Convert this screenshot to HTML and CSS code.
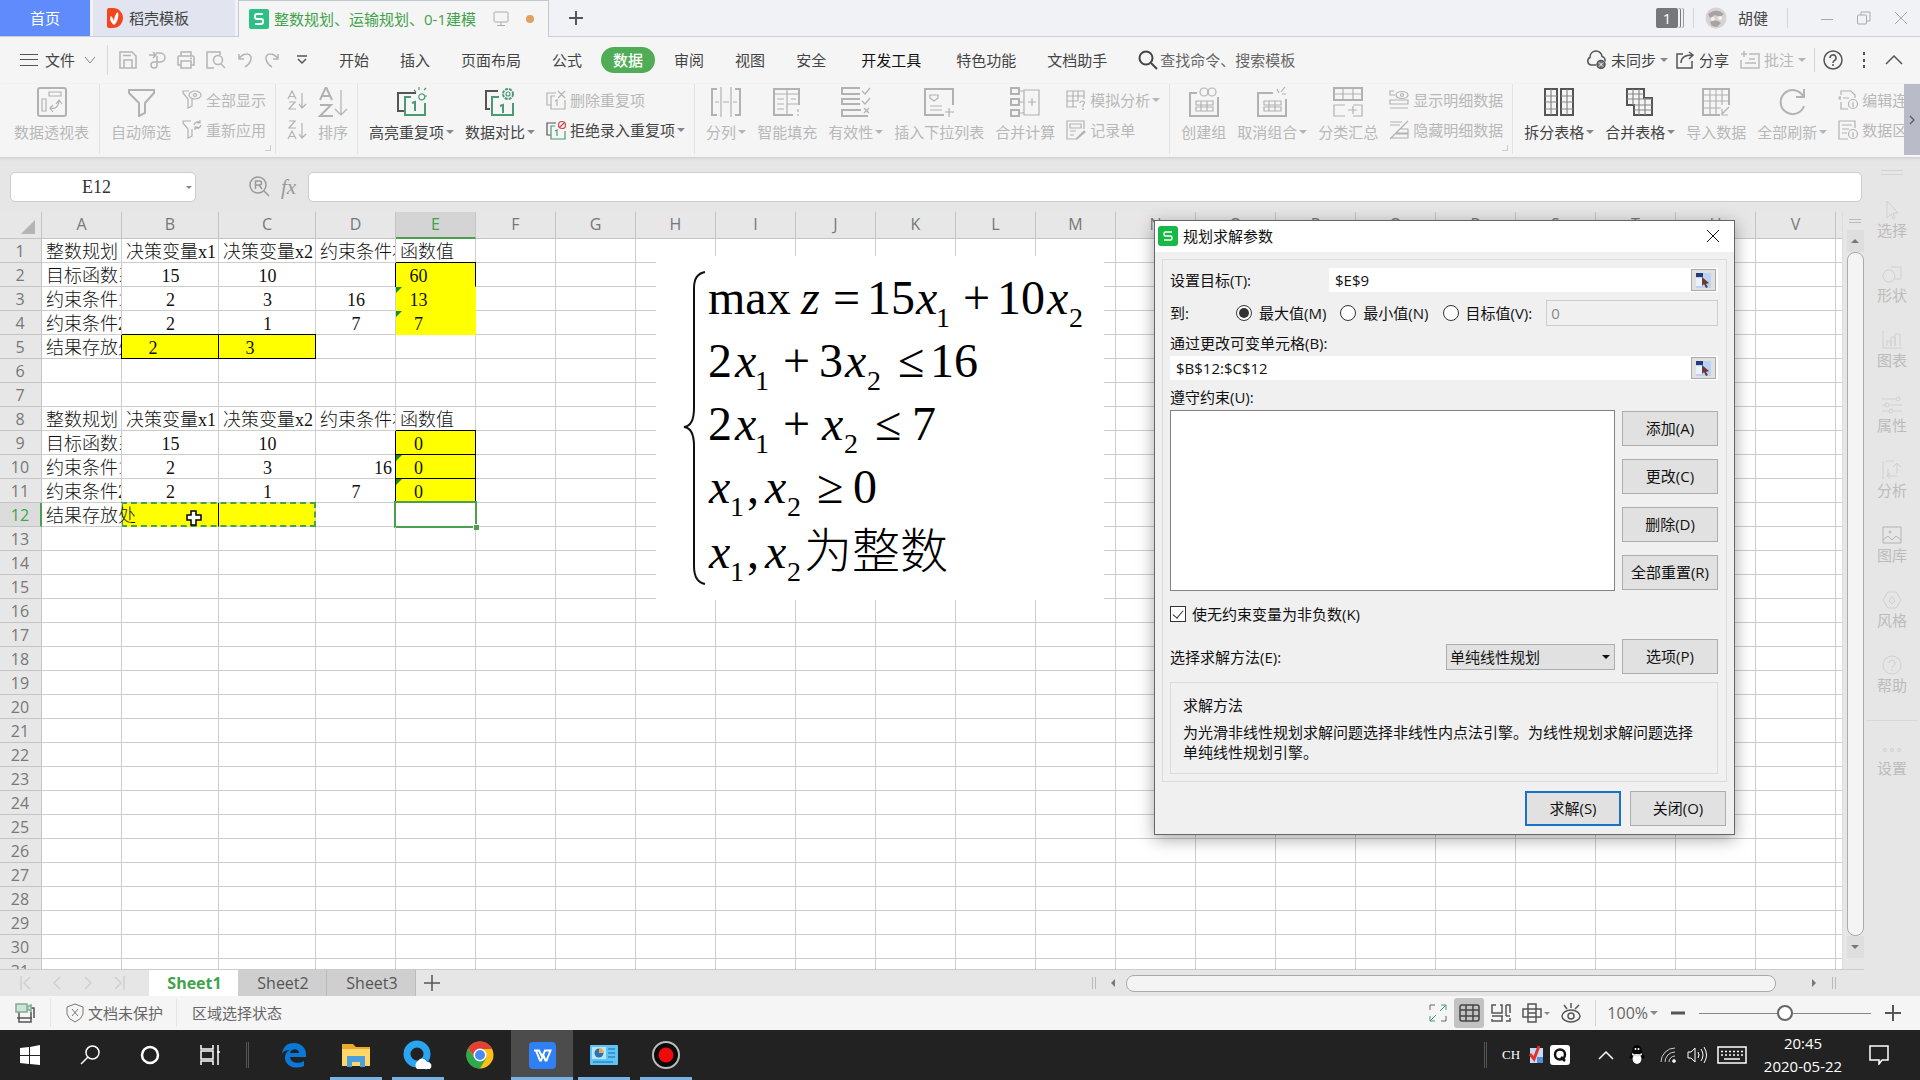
FILE: index.html
```html
<!DOCTYPE html>
<html lang="zh-CN">
<head>
<meta charset="utf-8">
<title>整数规划、运输规划、0-1建模</title>
<link rel="stylesheet" href="styles.css">
</head>
<body>
<header class="titlebar">
  <nav class="doc-tabs">
    <button class="doc-tab home">首页</button>
    <button class="doc-tab store">
      <svg width="16" height="20" viewBox="0 0 16 20"><path d="M0 2q0-2 2-2h4c6 0 10 5 10 10s-4 10-10 10H2q-2 0-2-2z" fill="#f5451f"/><path d="M7 17C2 13 3 9 4 8c2 2 3 4 3 6 0-4 1-8 4-10 1 4 0 10-4 13z" fill="#fff"/></svg>
      稻壳模板</button>
    <button class="doc-tab current">
      <svg width="20" height="20" viewBox="0 0 20 20"><rect width="20" height="20" rx="2" fill="#2cbf86"/><path d="M14 5H8Q6 5 6 7v1q0 2 2 2h4q2 0 2 2v1q0 2-2 2H6" fill="none" stroke="#fff" stroke-width="2"/></svg>
      <span>整数规划、运输规划、0-1建模</span>
      <svg class="monitor" width="16" height="16" viewBox="0 0 16 16" fill="none" stroke="#aaa"><rect x="1" y="1" width="14" height="10" rx="1"/><path d="M8 11v3M4 14.500h8"/></svg>
      <i class="unsaved"></i>
    </button>
    <button class="new-tab" aria-label="新建"><svg width="16" height="16" viewBox="0 0 16 16" stroke="#555" stroke-width="2"><path d="M8 1v14M1 8h14"/></svg></button>
  </nav>
  <div class="account">
    <span class="badge">1</span>
    <i class="rule"></i>
    <svg class="avatar" width="22" height="22" viewBox="0 0 22 22"><circle cx="11" cy="11" r="10.500" fill="#d8d3d3"/><path d="M3 7q8-7 16 0l-4 3-5-2-5 3zM5 15q6-4 11 1l-4 4-5-1z" fill="#a9a1a3"/><circle cx="8" cy="12" r="2" fill="#f3efef"/><circle cx="15" cy="11" r="2" fill="#f8f4f4"/></svg>
    <span class="user">胡健</span>
    <i class="rule"></i>
    <button class="win" aria-label="最小化"><svg width="14" height="14" viewBox="0 0 14 14" stroke="#aaa"><path d="M1 8.500h12"/></svg></button>
    <button class="win" aria-label="还原"><svg width="14" height="14" viewBox="0 0 14 14" fill="none" stroke="#aaa"><rect x=".5" y="4" width="9" height="9" rx="1"/><path d="M4 4V1h9v9H9.500"/></svg></button>
    <button class="win" aria-label="关闭"><svg width="14" height="14" viewBox="0 0 14 14" stroke="#aaa"><path d="M1 1l12 12M13 1L1 13"/></svg></button>
  </div>
</header>

<div class="menubar">
  <button class="file"><svg width="18" height="14" viewBox="0 0 18 14" stroke="#555"><path d="M0 1.500h18M0 6.500h18M0 12.500h18"/></svg>文件<svg class="chev" width="12" height="8" viewBox="0 0 12 8" fill="none" stroke="#888"><path d="M1 1l5 6 5-6"/></svg></button>
  <div class="quick">
    <button aria-label="保存"><svg width="18" height="18" viewBox="0 0 18 18"><path d="M1 1h12l4 4v12H1zM5 17V9h8v8M4 4.500h8"/></svg></button>
    <button aria-label="输出"><svg width="18" height="18" viewBox="0 0 18 18"><path d="M1 4h6M5 1l3 3-3 3M8 2h4a5 4.500 0 0 1 0 9H6a3 3 0 1 0 3 3V5"/></svg></button>
    <button aria-label="打印"><svg width="18" height="18" viewBox="0 0 18 18"><path d="M4 5V1h10v4M1 6q0-1 1-1h14q1 0 1 1v8h-3M4 14H1V6M4 10h10v7H4zM13 7.500h2"/></svg></button>
    <button aria-label="打印预览"><svg width="20" height="18" viewBox="0 0 20 18"><path d="M8 17H1V1h13v3"/><circle cx="12" cy="9" r="4.500"/><path d="M15 13l4 4"/></svg></button>
    <button aria-label="撤销"><svg width="16" height="18" viewBox="0 0 16 18"><path d="M2 3v5h5M2 8q3-5 8-5a4 4 0 0 1 4 5q-1 5-6 8"/></svg></button>
    <button aria-label="恢复"><svg width="16" height="18" viewBox="0 0 16 18"><path d="M14 3v5H9M14 8q-3-5-8-5a4 4 0 0 0-4 5q1 5 6 8"/></svg></button>
    <button class="more" aria-label="更多"><svg width="10" height="10" viewBox="0 0 10 10"><path d="M0 1h10M1 4l4 4 4-4"/></svg></button>
  </div>
  <nav class="menus">
    <button>开始</button><button>插入</button><button>页面布局</button><button>公式</button><button class="active">数据</button><button>审阅</button><button>视图</button><button>安全</button><button class="dev">开发工具</button><button>特色功能</button><button>文档助手</button>
    <button class="search"><svg width="20" height="20" viewBox="0 0 20 20" fill="none" stroke="#444" stroke-width="2"><circle cx="8" cy="8" r="6.500"/><path d="M13 13l6 6"/></svg>查找命令、搜索模板</button>
  </nav>
  <div class="share">
    <button><svg width="21" height="20" viewBox="0 0 21 20" fill="none" stroke="#555" stroke-width="1.500"><path d="M10 15H5a4 4 0 0 1-1-7.500 6 6 0 0 1 12-1 4 4 0 0 1 3 5"/><circle cx="15" cy="14.500" r="4" fill="#777"/><path d="M13 12.500l4 4M17 12.500l-4 4" stroke="#fff" stroke-width="1"/></svg>未同步<i class="caret"></i></button>
    <button class="b-share"><svg width="19" height="18" viewBox="0 0 19 18" fill="none" stroke="#555" stroke-width="1.500"><path d="M7 3H1v14h15v-7M5 12c0-5 3-8 11-8M13 1l4 3-4 4"/></svg>分享</button>
    <button class="dim"><svg width="20" height="18" viewBox="0 0 20 18" fill="none" stroke="#bbb" stroke-width="1.500"><path d="M9 3h10v14H1V9M1 3h6M4 0v6M9 8h6M5 12h11"/></svg>批注<i class="caret"></i></button>
    <i class="rule"></i>
    <button aria-label="帮助"><svg width="20" height="20" viewBox="0 0 20 20" fill="none" stroke="#555" stroke-width="1.500"><circle cx="10" cy="10" r="9"/><path d="M7 8a3 3 0 1 1 4.500 2.500Q10 11 10 13M10 14v2"/></svg></button>
    <button class="dots" aria-label="更多"><svg width="4" height="16" viewBox="0 0 4 16" fill="#555"><path d="M1 0h2v3H1zM1 7h2v3H1zM1 13h2v3H1z"/></svg></button>
    <button aria-label="收起"><svg width="18" height="10" viewBox="0 0 18 10" fill="none" stroke="#555" stroke-width="1.500"><path d="M1 9l8-8 8 8"/></svg></button>
  </div>
</div>

<div class="ribbon">
  <div class="group">
    <button class="big dim"><svg viewBox="0 0 30 30"><rect x="1" y="1" width="28" height="28" rx="2" stroke-width="2"/><path d="M12 5h12v4H12zM5 12h4v12H5zM13 21q8 2 9-7M19 17l3-4 3 4M16 18l-3 3 3 4"/></svg><span>数据透视表</span></button>
  </div>
  <div class="group">
    <button class="big dim"><svg viewBox="0 0 30 30"><path d="M3 3h25v3l-9 10v10l-6 3V16L3 6z" stroke-width="2"/></svg><span>自动筛选</span></button>
    <div class="pair">
      <button class="small dim"><svg viewBox="0 0 20 20"><path d="M7 1H1v2l5 6v9l4-2V9"/><ellipse cx="13" cy="5" rx="6" ry="4"/><circle cx="13" cy="5" r="1.500"/></svg>全部显示</button>
      <button class="small dim"><svg viewBox="0 0 20 20"><path d="M9 1H1v2l5 6v9l4-2V9M12 5q1-4 6-3M18 0v3h-3M19 5q-1 4-6 3M13 10V7h3"/></svg>重新应用</button>
    </div>
    <i class="launch"></i>
  </div>
  <div class="group">
    <div class="pair">
      <button class="small dim" aria-label="升序"><svg viewBox="0 0 20 20"><path d="M1 9l4-8 4 8M2.500 6.500h5M2 12h6l-6 7h7M15 3v15M12 14l3 4 4-4"/></svg></button>
      <button class="small dim" aria-label="降序"><svg viewBox="0 0 20 20"><path d="M2 1h6L2 8h7M1 19l4-8 4 8M2.500 16.500h5M15 3v15M12 14l3 4 4-4"/></svg></button>
    </div>
    <button class="big dim"><svg viewBox="0 0 30 30"><path d="M2 13L8 0l6 13M4 9h8M2 18h11L2 29h13" stroke-width="2"/><path d="M23 3v25M17 22l6 6 6-6"/></svg><span>排序</span></button>
  </div>
  <div class="group">
    <button class="big"><svg viewBox="0 0 30 30"><path d="M8 24H1V6h18" stroke-width="2"/><path d="M14 10H8v18h20V16M15 16l3-1v9" stroke="#4b9a76" stroke-width="2"/><path d="M22 11a3 3 0 1 0 2-4 3 3 0 0 0-2 4M22 0v3M17 3l2 2M27 3l2-2M27 9h3" stroke="#4b9a76"/></svg><span>高亮重复项<i class="caret"></i></span></button>
    <button class="big"><svg viewBox="0 0 30 30"><path d="M5 22H1V4h12" stroke-width="2"/><path d="M14 10H7v18h21V16M15 19l3-1v8" stroke="#4b9a76" stroke-width="2"/><circle cx="23" cy="7" r="5" stroke="#4b9a76" stroke-width="2" stroke-dasharray="3 1"/><circle cx="23" cy="7" r="2" stroke="#4b9a76"/></svg><span>数据对比<i class="caret"></i></span></button>
    <div class="pair">
      <button class="small dim"><svg viewBox="0 0 20 20"><path d="M5 15H1V3h9M9 6H5v13h14V10M9 11l2-1v6M12 1l7 7M19 1l-7 7"/></svg>删除重复项</button>
      <button class="small"><svg viewBox="0 0 20 20"><path d="M5 15H1V3h9"/><path d="M9 6H5v13h14V11M9 11l2-1v6" stroke="#4b9a76"/><circle cx="16" cy="5" r="3.500" stroke="#d0454c"/><path d="M13.500 7.500l5-5" stroke="#d0454c"/></svg>拒绝录入重复项<i class="caret"></i></button>
    </div>
  </div>
  <div class="group">
    <button class="big dim"><svg viewBox="0 0 30 30"><path d="M6 2H1v26h5M24 2h5v26h-5" stroke-width="2"/><path d="M10 0v30M20 0v30M4 15h4M12 15h6M22 15h4"/></svg><span>分列<i class="caret"></i></span></button>
    <button class="big dim"><svg viewBox="0 0 30 30"><path d="M27 18V2H2v26h19" stroke-width="2"/><path d="M15 2v26M2 7h25M5 12h7M5 17h7M5 22h7M15 17h12M19 12h5M26 22v3M26 27v2"/></svg><span>智能填充</span></button>
    <button class="big dim"><svg viewBox="0 0 30 30"><path d="M19 1H1v6h18M19 12H1v5h18M20 23H1v6h26" stroke-width="2"/><path d="M21 4l3 3 5-6M21 14l3 3 5-6M23 21l5 5M28 21l-5 5"/></svg><span>有效性<i class="caret"></i></span></button>
    <button class="big dim"><svg viewBox="0 0 30 30"><path d="M29 18V2H1v26h19" stroke-width="2"/><path d="M6 8h8v3l-4 3-4-3zM6 19h12M6 23h12M25 21v9M21 25h9"/></svg><span>插入下拉列表</span></button>
    <button class="big dim"><svg viewBox="0 0 30 30"><path d="M1 1h8v6H1zM1 12h8v6H1zM1 23h8v6H1z" stroke-width="2"/><path d="M14 3h15v25H14zM9 4h5M9 15h5M9 26h5M18 15h8M22 11v8"/></svg><span>合并计算</span></button>
    <div class="pair">
      <button class="small dim"><svg viewBox="0 0 20 20"><path d="M18 9V1H1v16h10M1 6h17M1 11h11M7 1v16M12 1v10M14 13q0-2 3-2 3 1 0 4v2M17 18v2"/></svg>模拟分析<i class="caret"></i></button>
      <button class="small dim"><svg viewBox="0 0 20 20"><path d="M18 9V1H1v18h8M4 4h11v4H4zM4 11h6M4 15h4M10 19l8-8 1 1-8 7z"/></svg>记录单</button>
    </div>
  </div>
  <div class="group">
    <button class="big dim"><svg viewBox="0 0 30 30"><path d="M8 6H1v23h28V10" stroke-width="2"/><path d="M7 14h17v4H7zM7 20h17v4H7zM12 14v10M18 14v10"/><circle cx="15" cy="5" r="4"/><circle cx="23" cy="5" r="4"/></svg><span>创建组</span></button>
    <button class="big dim"><svg viewBox="0 0 30 30"><path d="M16 6H1v23h28V12" stroke-width="2"/><path d="M7 14h17v4H7zM7 20h17v4H7zM12 14v10M18 14v10M20 2l2 4M28 0l-4 5M29 7h-4"/></svg><span>取消组合<i class="caret"></i></span></button>
    <button class="big dim"><svg viewBox="0 0 30 30"><path d="M1 1h28v12H1z" stroke-width="2"/><path d="M1 7h28M10 1v12M20 1v12M12 18H1v11h11M20 18h9v11h-9M15 23h9M20 19v8"/></svg><span>分类汇总</span></button>
    <div class="pair">
      <button class="small dim"><svg viewBox="0 0 20 20"><path d="M5 1H1v4h5M1 10h18v4H1zM1 18h18"/><ellipse cx="13" cy="5" rx="6" ry="3.500"/><circle cx="13" cy="5" r="1.500"/></svg>显示明细数据</button>
      <button class="small dim"><svg viewBox="0 0 20 20"><path d="M1 19L19 1M12 9h7v4H8M6 14h13v4H1M1 2h12M1 5h10"/></svg>隐藏明细数据</button>
    </div>
    <i class="launch"></i>
  </div>
  <div class="group">
    <button class="big"><svg viewBox="0 0 30 30"><path d="M1 2h12v26H1zM17 2h12v26H17z" stroke-width="2"/><path d="M1 9h12M1 15h12M1 22h12M7 2v26M17 9h12M17 15h12M17 22h12M23 2v26" stroke="#888"/></svg><span>拆分表格<i class="caret"></i></span></button>
    <button class="big"><svg viewBox="0 0 30 30"><path d="M2 2h17v9h8v17H9V18H2z" stroke-width="2"/><path d="M8 2v16M14 2v26M20 11v17M2 7h17M2 12h25M9 18h18M9 23h18" stroke="#888"/></svg><span>合并表格<i class="caret"></i></span></button>
    <button class="big dim"><svg viewBox="0 0 30 30"><path d="M28 18V2H2v26h17" stroke-width="2"/><path d="M2 8h26M2 14h26M2 21h18M9 2v26M15 2v26M21 2v16M28 20l-7 7M21 22v6h6" /></svg><span>导入数据</span></button>
    <button class="big dim"><svg viewBox="0 0 30 30"><path d="M26 9A12 12 0 1 0 27 19M27 2v8h-8" stroke-width="2"/></svg><span>全部刷新<i class="caret"></i></span></button>
    <div class="pair clip">
      <button class="small dim"><svg viewBox="0 0 20 20"><path d="M3 5V1h10l4 4v3M3 12v7h7M0 8h3M5 8h6M2 6v4"/><circle cx="15" cy="14" r="4.500"/><path d="M15 12v5"/></svg>编辑连接</button>
      <button class="small dim"><svg viewBox="0 0 20 20"><path d="M17 8V1H1v18h9M4 5h10M4 9h7M4 13h5"/><circle cx="15" cy="14" r="4.500"/><path d="M15 12v5"/></svg>数据区域</button>
    </div>
  </div>
  <button class="ribbon-scroll" aria-label="向右滚动"><svg width="6" height="10" viewBox="0 0 6 10"><path d="M1 1l4 4-4 4"/></svg></button>
</div>

<div class="work">
  <main class="editor">
    <div class="formula-bar">
      <div class="name-box"><input aria-label="名称框" value="E12"><i class="caret"></i></div>
      <svg class="find" width="21" height="22" viewBox="0 0 21 22" fill="none" stroke="#999" stroke-width="1.500"><circle cx="9" cy="9" r="8"/><path d="M15 15l5 5M6.500 13V5h4q2 0 2 2t-2 2h-4M10 9l3 4"/></svg>
      <i class="fx">fx</i>
      <input class="formula" aria-label="编辑栏">
    </div>
    <div class="sheet-area">
      <div class="sheet">
        <table id="grid"></table>
        <svg class="formula-picture" width="448" height="344" viewBox="0 0 448 344">
          <rect width="448" height="344" fill="#fff"/>
          <path d="M49 16Q38 18 38 32V152Q38 170 28 171Q38 172 38 190V310Q38 326 49 328" fill="none" stroke="#111" stroke-width="2"/>
          <g class="math">
            <text y="58"><tspan x="52">max</tspan><tspan x="145" class="v">z</tspan><tspan x="177">=</tspan><tspan x="211">15</tspan><tspan x="260" class="v">x</tspan><tspan x="307">+</tspan><tspan x="341">10</tspan><tspan x="391" class="v">x</tspan></text>
            <text y="71" class="sub"><tspan x="280">1</tspan><tspan x="413">2</tspan></text>
            <text y="121"><tspan x="52">2</tspan><tspan x="79" class="v">x</tspan><tspan x="127">+</tspan><tspan x="163">3</tspan><tspan x="189" class="v">x</tspan><tspan x="242">≤</tspan><tspan x="274">16</tspan></text>
            <text y="134" class="sub"><tspan x="99">1</tspan><tspan x="211">2</tspan></text>
            <text y="184"><tspan x="52">2</tspan><tspan x="79" class="v">x</tspan><tspan x="127">+</tspan><tspan x="166" class="v">x</tspan><tspan x="219">≤</tspan><tspan x="256">7</tspan></text>
            <text y="197" class="sub"><tspan x="99">1</tspan><tspan x="188">2</tspan></text>
            <text y="247"><tspan x="53" class="v">x</tspan><tspan x="91">,</tspan><tspan x="109" class="v">x</tspan><tspan x="161">≥</tspan><tspan x="197">0</tspan></text>
            <text y="260" class="sub"><tspan x="74">1</tspan><tspan x="131">2</tspan></text>
            <text y="312"><tspan x="53" class="v">x</tspan><tspan x="91">,</tspan><tspan x="109" class="v">x</tspan><tspan x="148" class="han">为整数</tspan></text>
            <text y="325" class="sub"><tspan x="74">1</tspan><tspan x="131">2</tspan></text>
          </g>
        </svg>
        <svg class="pointer" width="16" height="16" viewBox="0 0 16 16"><path d="M5 1h5v4h5v5h-5v5H5v-5H1V5h4z" fill="#fff" stroke="#000" stroke-width="1.500"/></svg>
      </div>
      <div class="vscroll"><i class="split"></i><i class="arrow up"></i><div class="thumb"></div><i class="arrow down"></i></div>
    </div>
    <div class="sheet-bar">
      <div class="sheet-nav">
        <svg width="12" height="14" viewBox="0 0 12 14"><path d="M1 0v14M10 1L4 7l6 6"/></svg><svg width="12" height="14" viewBox="0 0 12 14"><path d="M9 1L3 7l6 6"/></svg><svg width="12" height="14" viewBox="0 0 12 14"><path d="M3 1l6 6-6 6"/></svg><svg width="12" height="14" viewBox="0 0 12 14"><path d="M11 0v14M2 1l6 6-6 6"/></svg>
      </div>
      <button class="sheet-tab on">Sheet1</button><button class="sheet-tab">Sheet2</button><button class="sheet-tab">Sheet3</button>
      <button class="add-sheet" aria-label="新建工作表"><svg width="16" height="16" viewBox="0 0 16 16" stroke="#555" stroke-width="1.500"><path d="M8 0v16M0 8h16"/></svg></button>
      <div class="hscroll"><i class="grip"></i><i class="arrow left"></i><div class="thumb"></div><i class="arrow right"></i><i class="grip"></i></div>
    </div>
  </main>
  <aside class="side">
    <i class="handle"></i>
    <button><svg viewBox="0 0 20 20"><path d="M5 1v17l4-4 2 5 2-1-2-5h5z"/></svg>选择</button>
    <button><svg viewBox="0 0 20 20"><circle cx="7" cy="11" r="6"/><path d="M9 2h10v12h-6"/></svg>形状</button>
    <button><svg viewBox="0 0 20 20"><path d="M1 1v17h19M5 16v-5h4v5M9 16V7h4v9M13 16V4h5v12"/></svg>图表</button>
    <button><svg viewBox="0 0 20 20"><path d="M0 4h14M8 10h12M0 10h3M0 16h7M12 16h8"/><circle cx="16" cy="4" r="2"/><circle cx="5" cy="10" r="2"/><circle cx="9" cy="16" r="2"/></svg>属性</button>
    <button><svg viewBox="0 0 20 20"><path d="M1 1v18M4 1h8M15 14V3M11 7l4-4 4 4M6 9v7h9M8 13l-3 3 3 3"/></svg>分析</button>
    <button class="lib"><svg viewBox="0 0 20 20"><path d="M1 2h18v16H1zM1 15l5-4 4 4 4-4 5 4"/><circle cx="8" cy="7" r="1"/></svg>图库</button>
    <button><svg viewBox="0 0 20 20"><path d="M6 2h8l5 8-5 8H6l-5-8zM10 6l3 5-3 3-3-3z"/></svg>风格</button>
    <button><svg viewBox="0 0 20 20"><circle cx="10" cy="10" r="9"/><path d="M7 8a3 3 0 1 1 4 3l-1 2M10 14v2"/></svg>帮助</button>
    <button class="settings"><svg viewBox="0 0 20 20"><circle cx="3" cy="12" r="1.500"/><circle cx="10" cy="12" r="1.500"/><circle cx="17" cy="12" r="1.500"/></svg>设置</button>
  </aside>
</div>

<footer class="status">
  <svg class="rec" width="20" height="20" viewBox="0 0 20 20" fill="none" stroke="#555" stroke-width="1.500"><path d="M4 9v10h12V9M14 5h5v10M2 15h15"/><path d="M1 1h11v8H1zM12 4l4-2v6l-4-2" stroke="#7fae95" fill="#cfe3d8"/></svg>
  <span class="cell protect"><svg width="18" height="20" viewBox="0 0 18 20" fill="none" stroke="#777"><path d="M9 1l8 3v7q-1 5-8 8-7-3-8-8V4zM6 6l6 7M12 6l-6 7"/></svg>文档未保护</span>
  <span class="cell">区域选择状态</span>
  <div class="views">
    <button aria-label="全屏"><svg width="18" height="18" viewBox="0 0 18 18" fill="none" stroke="#4b9a76"><path d="M1 6V1h5M12 17h5v-5" stroke="#666"/><path d="M11 7l6-6M12 1h5v5M7 11l-6 6M1 12v5h5"/></svg></button>
    <button class="on" aria-label="普通视图"><svg width="21" height="18" viewBox="0 0 21 18" fill="none" stroke="#444" stroke-width="1.500"><rect x="1" y="1" width="19" height="16" rx="2"/><path d="M7 1v16M14 1v16M1 6h19M1 12h19"/></svg></button>
    <button aria-label="分页预览"><svg width="20" height="18" viewBox="0 0 20 18" fill="none" stroke="#555" stroke-width="1.500"><path d="M5 1H1v8h10V1H9M15 1h4v8M1 12h11M15 12h4M1 15v2h10v-5M15 17h4v-3M15 1v11"/></svg></button>
    <button class="layout" aria-label="阅读版式"><svg width="20" height="20" viewBox="0 0 20 20" fill="none" stroke="#555" stroke-width="1.500"><rect x="6" y="1" width="8" height="18"/><rect x="1" y="6" width="18" height="8"/><path d="M6 10h8"/></svg><i class="caret"></i></button>
    <button class="eye" aria-label="护眼模式"><svg width="21" height="20" viewBox="0 0 21 20" fill="none" stroke="#555" stroke-width="1.500"><ellipse cx="10" cy="13" rx="9" ry="6"/><circle cx="10" cy="13" r="3"/><path d="M10 0v5M3 2l3 4M18 2l-4 4"/></svg></button>
    <i class="rule"></i>
    <span class="pct">100%<i class="caret"></i></span>
    <button aria-label="缩小"><svg width="14" height="14" viewBox="0 0 14 14" stroke="#555" stroke-width="3"><path d="M0 7h14"/></svg></button>
    <input type="range" aria-label="显示比例" min="0" max="100" value="50">
    <button aria-label="放大"><svg width="16" height="16" viewBox="0 0 16 16" stroke="#555" stroke-width="2"><path d="M0 8h16M8 0v16"/></svg></button>
  </div>
</footer>

<div class="taskbar">
  <button class="sys" aria-label="开始"><svg width="20" height="20" viewBox="0 0 20 20" fill="#fff"><path d="M0 3l9-1v8H0zM10 2l10-2v10H10zM0 11h9v8l-9-1zM10 11h10v9l-10-1z"/></svg></button>
  <button class="sys" aria-label="搜索"><svg width="20" height="20" viewBox="0 0 20 20" fill="none" stroke="#fff" stroke-width="1.500"><circle cx="12.500" cy="7.500" r="6.500"/><path d="M8 12l-7 7"/></svg></button>
  <button class="sys" aria-label="Cortana"><svg width="20" height="20" viewBox="0 0 20 20" fill="none" stroke="#fff" stroke-width="2.500"><circle cx="10" cy="10" r="8"/></svg></button>
  <button class="sys" aria-label="任务视图"><svg width="20" height="20" viewBox="0 0 20 20" fill="none" stroke="#fff" stroke-width="1.500"><path d="M1 0v4h12V0M1 6h12v8H1zM1 20v-4h12v4M18 0v20M17 7h3"/></svg></button>
  <i class="sep"></i>
  <button class="app" aria-label="Edge"><svg width="26" height="26" viewBox="0 0 26 26"><path d="M1 12C2 4 7 1 13 1c8 0 12 6 12 11v3H9c0 5 8 8 14 4v5C14 28 4 24 4 16c0-4 2-7 5-8-5 0-7 2-8 4zm8-1h9c0-5-8-5-9 0z" fill="#0a78d6"/></svg></button>
  <button class="app run" aria-label="文件资源管理器"><svg width="28" height="24" viewBox="0 0 28 24"><path d="M0 1h11l3 3h14v19H0z" fill="#e8a92c"/><path d="M0 6h28v17H0z" fill="#ffd766"/><path d="M5 24V13h18v11h-5v-5h-8v5z" fill="#4a9fdc"/></svg></button>
  <button class="app run" aria-label="QQ浏览器"><svg width="30" height="30" viewBox="0 0 30 30"><circle cx="14" cy="14" r="10" fill="none" stroke="#29a5f2" stroke-width="7"/><path d="M22 18l7 7-6 5-8-7" fill="#1180e8"/><path d="M14 29a5 5 0 0 1 1-8 5 5 0 0 1 9 1 4 4 0 0 1 3 7z" fill="#fff"/></svg></button>
  <button class="app" aria-label="Chrome"><svg width="28" height="28" viewBox="0 0 28 28"><circle cx="14" cy="14" r="13.500" fill="#fbc116"/><path d="M2 7.500A13.500 13.500 0 0 1 26 8H14l-5 9z" fill="#e34133"/><path d="M2 7.500A13.500 13.500 0 0 0 14 27.500l6-10H9z" fill="#2da94f"/><circle cx="14" cy="14" r="6.500" fill="#fff"/><circle cx="14" cy="14" r="5" fill="#4a8af4"/></svg></button>
  <button class="app run active" aria-label="WPS"><svg width="27" height="27" viewBox="0 0 27 27"><rect width="27" height="27" rx="4" fill="#2f7ff5"/><path d="M5 8.500h5l4 8M7 8.500l4 10h1l4-10h5.500l-4 10h-1l-3-7" fill="none" stroke="#fff" stroke-width="2"/></svg></button>
  <button class="app run" aria-label="控制面板"><svg width="28" height="20" viewBox="0 0 28 20"><rect width="28" height="20" rx="1" fill="#5fc4f5"/><path d="M2 2h14v12H2z" fill="#b9e6fb"/><circle cx="9" cy="8" r="4.500" fill="#2a72b8"/><path d="M9 8V3a5 5 0 0 1 5 5z" fill="#f5a73b"/><path d="M18 4h7M18 8h7M18 12h7M3 17h20" stroke="#1a6aad"/></svg></button>
  <button class="app run" aria-label="录屏"><svg width="28" height="28" viewBox="0 0 28 28"><circle cx="14" cy="14" r="13" fill="#0a0a0a" stroke="#bbb" stroke-width="2"/><circle cx="14" cy="14" r="7.500" fill="#f00a0a"/></svg></button>
  <div class="tray">
    <i class="sep"></i>
    <span class="ime">CH</span>
    <svg width="16" height="20" viewBox="0 0 16 20"><path d="M2 3h13v15H2z" fill="#c6dcf5"/><path d="M9 12h6v6H9z" fill="#5a8fd8"/><path d="M2 9l4 5 5-13" fill="none" stroke="#e2322a" stroke-width="3"/></svg>
    <svg class="qbox" width="20" height="20" viewBox="0 0 20 20"><rect x="1" y="1" width="18" height="18" rx="2" fill="#fff" stroke="#fff" stroke-width="2"/><circle cx="10" cy="9.500" r="5" fill="none" stroke="#111" stroke-width="2.500"/><path d="M11 12l4 4" stroke="#111" stroke-width="2.500"/></svg>
    <svg class="up" width="16" height="10" viewBox="0 0 16 10" fill="none" stroke="#fff" stroke-width="1.500"><path d="M1 9l7-7 7 7"/></svg>
    <svg class="qq" width="16" height="20" viewBox="0 0 16 20"><path d="M8 0c4 0 5 4 5 7l3 6-3 1q0 5-5 5t-5-5l-3-1 3-6c0-3 1-7 5-7z" fill="#050505"/><ellipse cx="8" cy="14" rx="4.500" ry="5" fill="#fff"/><path d="M3 8q5 3 10 0v2q-5 3-10 0z" fill="#ddd"/><circle cx="6.500" cy="4" r="1" fill="#fff"/><circle cx="9.500" cy="4" r="1" fill="#fff"/></svg>
    <svg class="wifi" width="16" height="16" viewBox="0 0 16 16" fill="none" stroke="#ccc"><path d="M1 15A14 14 0 0 1 15 1M5 15A10 10 0 0 1 15 5M9 15a6 6 0 0 1 6-6"/><circle cx="14" cy="14" r="1.500" fill="#fff"/></svg>
    <svg class="vol" width="21" height="18" viewBox="0 0 21 18" fill="none" stroke="#fff"><path d="M1 6h3l4-4v14l-4-4H1zM11 6q2 3 0 6M14 3q4 6 0 12M17 1q5 8 0 16"/></svg>
    <svg class="kb" width="30" height="18" viewBox="0 0 30 18" fill="none" stroke="#fff" stroke-width="1.500"><rect x="1" y="1" width="28" height="16"/><path d="M4 5.500h22M4 9h22" stroke-dasharray="2 2"/><path d="M7 13h16"/></svg>
    <time class="clock">20:45<br>2020-05-22</time>
    <svg class="note" width="20" height="20" viewBox="0 0 20 20" fill="none" stroke="#fff" stroke-width="1.500"><path d="M1 1h18v14h-6l-3 4v-4H1z"/></svg>
  </div>
</div>

<form class="dialog">
  <div class="dlg-title">
    <svg width="20" height="20" viewBox="0 0 20 20"><rect width="20" height="20" rx="3" fill="#17b845"/><path d="M14 6H7Q6 6 6 8t1 2h6q1 0 1 2t-1 2H6" fill="none" stroke="#fff" stroke-width="1.500"/></svg>
    <span>规划求解参数</span>
    <button type="button" aria-label="关闭"><svg width="12" height="12" viewBox="0 0 12 12" stroke="#111"><path d="M0 0l12 12M12 0L0 12"/></svg></button>
  </div>
  <div class="dlg-frame">
    <div class="row target"><label for="tgt">设置目标(T):</label><div class="ref"><input id="tgt" value="$E$9"><button type="button" aria-label="选取"><svg width="15" height="15" viewBox="0 0 15 15"><path d="M0 0h15v15H0z" fill="#bcd2f4"/><path d="M0 0h7v4H0z" fill="#263a78"/><path d="M0 5h7v8H0z" fill="#eaf1fc"/><path d="M6 4l7 6-3 1 2 3-2 1-2-4-2 2z" fill="#6b3a36"/></svg></button></div></div>
    <div class="row goal"><span class="to">到:</span>
      <label><input type="radio" name="goal" checked>最大值(M)</label>
      <label><input type="radio" name="goal">最小值(N)</label>
      <label><input type="radio" name="goal">目标值(V):</label>
      <input class="val" aria-label="目标值" value="0" disabled></div>
    <label class="line" for="vars">通过更改可变单元格(B):</label>
    <div class="ref"><input id="vars" value="$B$12:$C$12"><button type="button" aria-label="选取"><svg width="15" height="15" viewBox="0 0 15 15"><path d="M0 0h15v15H0z" fill="#bcd2f4"/><path d="M0 0h7v4H0z" fill="#263a78"/><path d="M0 5h7v8H0z" fill="#eaf1fc"/><path d="M6 4l7 6-3 1 2 3-2 1-2-4-2 2z" fill="#6b3a36"/></svg></button></div>
    <label class="line" for="cons">遵守约束(U):</label>
    <div class="row rules">
      <select id="cons" size="6"></select>
      <div class="stack"><button type="button">添加(A)</button><button type="button">更改(C)</button><button type="button">删除(D)</button><button type="button">全部重置(R)</button></div>
    </div>
    <label class="check"><input type="checkbox" checked>使无约束变量为非负数(K)</label>
    <div class="row method"><label for="eng">选择求解方法(E):</label>
      <div class="combo"><select id="eng"><option>单纯线性规划</option></select></div>
      <button type="button">选项(P)</button></div>
    <div class="about"><p>求解方法</p><p>为光滑非线性规划求解问题选择非线性内点法引擎。为线性规划求解问题选择单纯线性规划引擎。</p></div>
  </div>
  <div class="dlg-foot"><button type="button" class="primary">求解(S)</button><button type="button">关闭(O)</button></div>
</form>
<script src="sheet.js"></script>
</body>
</html>
```
FILE: styles.css
```css
*, *::before, *::after { box-sizing: border-box; }
body { margin: 0; height: 100vh; display: flex; flex-direction: column; overflow: hidden; position: relative; background: #e6e6e6; color: #444; font: 15px/20px "Open Sans", "Noto Sans CJK SC", sans-serif; }
button { font: inherit; color: inherit; background: none; border: 0; padding: 0; margin: 0; display: flex; align-items: center; white-space: nowrap; }
input, select { font: inherit; color: inherit; margin: 0; }
svg { display: block; flex: none; }
i { font-style: normal; display: block; flex: none; }
.rule { width: 1px; background: #d4d4d8; }
.caret { border: 4px solid transparent; border-top-color: #888; border-bottom: 0; width: 8px; margin-left: 2px; display: inline-block; vertical-align: 4px; }
.dim .caret { border-top-color: #b5b5b5; }

.titlebar { height: 37px; flex: none; display: flex; justify-content: space-between; background: #f0f2f6; border-bottom: 1px solid #c9cdd8; }
.doc-tabs { display: flex; }
.doc-tab { height: 36px; }
.home { width: 90px; justify-content: center; background: #5f8bfc; color: #fff; margin-right: 3px; }
.store { width: 142px; padding-left: 14px; gap: 6px; background: #e2e5ef; margin-right: 3px; }
.current { width: 311px; height: 37px; padding-left: 10px; gap: 5px; background: #f5f5f5; color: #3fa34a; border: 1px solid #c4c8d0; border-bottom: 0; }
.monitor { margin-left: 12px; }
.unsaved { width: 8px; height: 8px; border-radius: 4px; background: #e0a060; margin-left: 12px; }
.new-tab { margin-left: 19px; }
.account { display: flex; align-items: center; padding-right: 12px; }
.account .rule { height: 20px; margin: 0 11px; }
.badge { width: 22px; height: 20px; border-radius: 2px; background: #757779; color: #fff; text-align: center; box-shadow: 2px 0 #f0f2f6, 3px 0 #757779, 5px 0 #f0f2f6, 6px 0 #999; margin-right: 4px; }
.user { margin: 0 8px 0 11px; }
.win { margin-left: 23px; }
.account .rule + .win { margin-left: 21px; }

.menubar { height: 47px; flex: none; display: flex; align-items: center; background: #f5f5f5; padding-bottom: 2px; }
.file { padding: 0 11px 0 20px; gap: 7px; height: 30px; border-right: 1px solid #d8d8d8; }
.chev { margin-left: 2px; }
.quick { display: flex; gap: 11px; padding-left: 11px; }
.quick svg { fill: none; stroke: #b4b4b4; stroke-width: 1.5; }
.quick .more { padding-left: 6px; }
.quick .more svg { stroke: #555; }
.menus { display: flex; gap: 31px; margin-left: 32px; align-items: center; }
.menus .active { background: #50ad55; color: #fff; height: 26px; border-radius: 13px; padding: 0 12px; margin: 0 -12px; font-weight: 500; }
.menus .dev { margin: 0 4px; color: #111; }
.search { gap: 2px; color: #666; }
.share { display: flex; align-items: center; margin-left: auto; padding-right: 17px; gap: 8px; }
.share button { gap: 4px; }
.share .caret { margin-left: 0; }
.share .rule { height: 24px; }
.share .dots { padding: 0 11px; }
.share .b-share { padding-right: 3px; }
.dim { color: #b8b8b8; }

.ribbon { height: 74px; flex: none; display: flex; background: #f5f5f5; border-bottom: 1px solid #d2d2d2; box-shadow: 0 1px 2px #d6d6d6; overflow: hidden; position: relative; }
.group { display: flex; gap: 11px; padding: 3px 9px 0 11px; border-right: 1px solid #e2e2e2; position: relative; flex: none; height: 70px; }
.group:first-child { padding-left: 14px; padding-right: 10px; }
.group:last-of-type { border: 0; flex: 1 1 0; min-width: 0; padding-right: 0; }
.ribbon svg { fill: none; stroke: #555; stroke-width: 1.2; }
.ribbon .dim svg { stroke: #b2b2b2; }
.big { flex-direction: column; gap: 5px; flex: none; height: 55px; }
.big svg { width: 30px; height: 30px; }
.pair { display: flex; flex-direction: column; gap: 10px; padding-top: 3px; }
.clip { overflow: hidden; flex: 1; }
.small { gap: 4px; height: 20px; flex: none; }
.small svg { width: 20px; height: 20px; }
.small .caret { margin-left: -2px; }
.launch { position: absolute; right: 4px; bottom: 3px; width: 6px; height: 6px; border: solid #ccc; border-width: 0 1px 1px 0; }
.ribbon-scroll { width: 16px; height: 71px; flex: none; background: #b9bcc8; justify-content: center; }

.work { flex: 1; min-height: 0; display: flex; }
.editor { flex: 1; min-width: 0; display: flex; flex-direction: column; }
.formula-bar { display: flex; align-items: center; padding: 14px 2px 10px 10px; height: 54px; flex: none; }
.name-box { width: 186px; height: 30px; background: #fff; border: 1px solid #ccc; border-radius: 5px; display: flex; align-items: center; padding-right: 3px; }
.name-box input { border: 0; width: 100%; min-width: 0; padding: 0 4px 0 0; background: none; text-align: center; font: 18px "Liberation Serif", serif; color: #333; }
.name-box .caret { margin: 0; border-width: 3px; border-bottom: 0; width: 6px; }
.find { margin-left: 53px; }
.fx { font: italic 21px "Liberation Serif", serif; color: #999; margin: 0 9px 0 11px; width: 18px; }
.formula { flex: 1; height: 30px; background: #fff; border: 1px solid #ccc; border-radius: 5px; min-width: 0; }
.sheet-area { flex: 1; min-height: 0; display: flex; }
.sheet { flex: 1; min-width: 0; overflow: hidden; position: relative; background: #fff; border-right: 1px solid #ddd; }
table { border-collapse: separate; border-spacing: 0; table-layout: fixed; width: 1916px; }
th { font-size: 16px; font-weight: 400; color: #777; background: #e7e7e7; padding: 0; border: solid #c4c4c4; border-width: 0 1px 1px 0; height: 24px; line-height: 21px; }
thead th { height: 27px; line-height: 24px; padding-bottom: 2px; }
tbody th { padding: 2px 1px 0 0; }
thead th.sel { background: #d4d4d4; color: #3fa34a; border-bottom: 2px solid #4aa04e; padding-bottom: 1px; }
tbody th.sel { background: #dcdcdc; color: #3fa34a; border-right: 2px solid #4aa04e; padding-right: 0; }
.corner::after { content: ""; display: block; border: 7px solid transparent; border-right-color: #b4b4b4; border-bottom-color: #b4b4b4; width: 0; margin: 6px 0 0 21px; }
td { height: 24px; line-height: 19px; padding: 4px 3px 0 4px; overflow: hidden; white-space: nowrap; border: solid #cdcdcd; border-width: 0 1px 1px 0; font-family: "Liberation Serif", "Noto Sans CJK SC", serif; font-size: 18px; font-weight: 300; color: #111; position: relative; }
td.c { text-align: center; }
td.r { text-align: right; }
td.y { background: #ff0; }
td.s { text-align: center; padding-right: 38px; }
td.flat { border-color: #ff0; }
td.box { border-color: #000; }
td.topline { box-shadow: 0 -1px #000, -1px 0 #000; overflow: visible; }
td.open { border-bottom-color: #ff0; border-right-color: #000; }
td.spill { overflow: visible; z-index: 3; }
td.err::before { content: ""; position: absolute; left: 0; top: 0; border: 3px solid transparent; border-left-color: #178a2c; border-top-color: #178a2c; }
td.ants, td.cursor { overflow: visible; }
td.ants { border-bottom-color: #ff0; }
td.ants::after { content: ""; position: absolute; left: -1px; top: -1px; width: 195px; height: 25px; border: 2px dashed #4aa04e; z-index: 2; }
td.cursor::after { content: ""; position: absolute; left: -2px; top: -2px; right: -2px; bottom: -2px; border: 2px solid #4aa04e; }
td.cursor::before { content: ""; position: absolute; right: -4px; bottom: -4px; width: 6px; height: 6px; background: #4aa04e; border: solid #fff; border-width: 1px 0 0 1px; z-index: 2; }
.formula-picture { position: absolute; left: 656px; top: 44px; }
.math { font: 48px "Liberation Serif", "Noto Sans CJK SC", serif; fill: #000; }
.math .v { font-style: italic; }
.math .sub { font-size: 28px; }
.math .han { font-weight: 300; }
.pointer { position: absolute; left: 186px; top: 298px; z-index: 4; }
.vscroll { width: 21px; flex: none; display: flex; flex-direction: column; align-items: center; padding: 7px 0 11px 3px; }
.split { width: 12px; height: 4px; border: solid #bbb; border-width: 1px 0; margin-bottom: 7px; }
.arrow { display: flex; align-items: center; justify-content: center; width: 16px; }
.arrow::after { content: ""; border: 4px solid transparent; }
.vscroll .arrow { width: 17px; height: 22px; background: #dedede; }
.vscroll .up::after { border-bottom-color: #777; border-top: 0; }
.vscroll .down::after { border-top-color: #777; border-bottom: 0; }
.thumb { background: #f4f4f4; border: 1px solid #aaa; border-radius: 8px; flex: 1; }
.vscroll .thumb { width: 17px; }

.sheet-bar { height: 27px; flex: none; display: flex; align-items: center; border-top: 1px solid #ccc; }
.sheet-nav { width: 149px; padding-left: 20px; display: flex; gap: 19px; }
.sheet-nav svg { fill: none; stroke: #d0d0d0; stroke-width: 1.5; }
.sheet-tab { width: 89px; height: 26px; justify-content: center; font-size: 16px; background: #cfcfcf; color: #555; border-right: 1px solid #bbb; padding-left: 2px; }
.sheet-tab.on { background: #fff; color: #3fa34a; font-weight: 700; border: 0; }
.add-sheet { margin-left: 8px; }
.hscroll { flex: 0 1 744px; margin: 0 28px 0 auto; display: flex; align-items: center; height: 17px; }
.grip { width: 4px; height: 12px; border: solid #bbb; border-width: 0 1px; }
.hscroll .thumb { height: 17px; flex: 1; margin: 0 30px 0 5px; }
.hscroll .left { margin-left: 9px; }
.left::after { border-right-color: #777; border-left: 0; }
.hscroll .right { margin-right: 10px; }
.right::after { border-left-color: #777; border-right: 0; }

.side { width: 56px; flex: none; display: flex; flex-direction: column; align-items: center; padding-top: 12px; color: #bcbcbc; }
.handle { width: 22px; height: 5px; border: solid #d2d2d2; border-width: 1px 0; margin-bottom: 25px; }
.side button { flex-direction: column; height: 65px; gap: 0; }
.side svg { width: 20px; height: 20px; fill: none; stroke: #d0d0d0; }
.side .lib svg { stroke: #b4b4b4; }
.side .settings { border-top: 1px solid #d8d8d8; width: 50px; padding-top: 17px; }

.status { height: 34px; flex: none; display: flex; align-items: center; background: #f5f5f5; color: #666; }
.rec { margin: 0 15px; }
.cell { display: flex; align-items: center; gap: 4px; height: 28px; padding: 0 15px; border-left: 1px solid #e4e4e4; }
.protect { padding-right: 13px; }
.views { margin-left: auto; display: flex; align-items: center; padding-right: 19px; height: 30px; }
.views .on { background: #c2c2c2; width: 30px; height: 30px; border-radius: 3px; justify-content: center; margin: 0 7px; }
.layout { margin: 0 11px; }
.layout .caret { margin-left: 2px; border-width: 3px; border-bottom: 0; width: 6px; }
.views .rule { height: 26px; margin: 0 11px 0 13px; }
.pct { font-size: 16px; margin-right: 13px; }
.views input { appearance: none; width: 172px; height: 20px; margin: 0 14px; background: linear-gradient(#888, #888) center/100% 1px no-repeat; }
.views input::-webkit-slider-thumb { appearance: none; width: 16px; height: 16px; border-radius: 8px; background: #fff; border: 2px solid #666; }

.taskbar { height: 50px; flex: none; display: flex; background: #222; color: #fff; }
.sys { width: 60px; justify-content: center; }
.taskbar .sep { width: 3px; height: 26px; border: solid #555; border-width: 0 1px; align-self: center; }
.sys + .sep { margin: 0 14px 0 6px; }
.app { width: 62px; justify-content: center; position: relative; }
.run::after { content: ""; position: absolute; left: 5px; right: 5px; bottom: 0; height: 3px; background: #76b3e6; }
.run.active { background: #4d4c4c; }
.run.active::after { left: 0; right: 0; }
.tray { margin-left: auto; display: flex; align-items: center; padding-right: 31px; }
.ime { font: 13px "Liberation Serif", serif; width: 24px; margin: 0 2px 0 15px; }
.qbox { margin: 0 28px 0 6px; }
.qq { margin: 0 15px; }
.vol { margin: 0 9px 0 11px; }
.clock { text-align: center; line-height: 23px; width: 90px; margin: 0 21px 0 11px; }

.dialog { position: absolute; left: 1154px; top: 220px; width: 581px; background: #f0f0f0; border: 1px solid #666; box-shadow: 0 4px 16px rgba(0,0,0,.35); color: #111; }
.dlg-title { height: 31px; background: #fff; display: flex; align-items: center; gap: 5px; padding: 0 15px 1px 3px; }
.dlg-title button { margin-left: auto; }
.dlg-frame { margin: 7px 7px 0; border: 1px solid #dcdcdc; padding: 8px 8px 7px 7px; }
.row { display: flex; align-items: center; }
.row.target label { width: 159px; }
.ref { display: flex; align-items: center; background: #fff; height: 24px; flex: 1; padding-right: 2px; }
.ref input { flex: 1; min-width: 0; border: 0; background: none; padding: 0 6px; }
.ref button { width: 25px; height: 22px; background: #e1e1e1; border: 1px solid #aaa; justify-content: center; }
.goal { margin-top: 8px; height: 26px; }
.goal .to { width: 66px; }
.goal label { display: flex; align-items: center; gap: 7px; margin-right: 14px; flex: none; }
input[type=radio], input[type=checkbox] { appearance: none; width: 16px; height: 16px; border: 1px solid #333; background: #fff; flex: none; display: grid; place-items: center; }
input[type=radio] { border-radius: 8px; }
input[type=radio]:checked::after { content: ""; width: 10px; height: 10px; border-radius: 5px; background: #333; }
input[type=checkbox]:checked::after { content: ""; width: 6px; height: 10px; border: solid #333; border-width: 0 1px 1px 0; rotate: 40deg; margin-top: -3px; }
.goal .val { flex: 1; min-width: 0; height: 26px; border: 1px solid #ccc; background: #f0f0f0; color: #888; padding: 0 4px; }
.line { display: block; margin: 7px 0 3px; }
.rules { align-items: stretch; gap: 7px; }
.rules select { flex: 1; min-width: 0; height: 181px; border: 1px solid #828282; border-radius: 0; background: #fff; overflow: hidden; }
.stack { display: flex; flex-direction: column; gap: 13px; padding-top: 1px; }
.stack button, .method button, .dlg-foot button { width: 96px; height: 35px; background: #e1e1e1; border: 1px solid #adadad; justify-content: center; padding-bottom: 1px; }
.check { display: flex; align-items: center; gap: 6px; margin: 13px 0 15px; height: 20px; }
.combo { position: relative; margin: 0 7px 0 auto; width: 169px; height: 26px; }
.combo::after { content: ""; position: absolute; right: 5px; top: 11px; border: 4px solid transparent; border-top-color: #111; border-bottom: 0; pointer-events: none; }
.combo select { width: 100%; height: 100%; border: 1px solid #adadad; border-radius: 0; appearance: none; padding: 0 3px; background: #e1e1e1; }
.about { margin-top: 8px; border: 1px solid #dcdcdc; padding: 12px 11px 9px 12px; height: 92px; }
.about p { margin: 0 0 7px; }
.dlg-foot { display: flex; justify-content: flex-end; gap: 9px; padding: 9px 8px 8px; }
.dlg-foot .primary { border: 2px solid #1873c4; }
```
FILE: sheet.js
```js
// Builds the worksheet grid: columns A to W, rows 1 to 31.
const letters = "ABCDEFGHIJKLMNOPQRSTUVW".split("");
const wide = { B: 97, C: 97 };

// Cell address -> [text, class names]
const cells = {
  A1: ["整数规划"], B1: ["决策变量x1", "c"], C1: ["决策变量x2", "c"], D1: ["约束条件右"], E1: ["函数值"],
  A2: ["目标函数系"], B2: ["15", "c"], C2: ["10", "c"], E2: ["60", "s y open topline"],
  A3: ["约束条件1"], B3: ["2", "c"], C3: ["3", "c"], D3: ["16", "c"], E3: ["13", "s y flat err"],
  A4: ["约束条件2"], B4: ["2", "c"], C4: ["1", "c"], D4: ["7", "c"], E4: ["7", "s y flat err"],
  A5: ["结果存放处"], B5: ["2", "s y box topline"], C5: ["3", "s y box topline"],
  A8: ["整数规划"], B8: ["决策变量x1", "c"], C8: ["决策变量x2", "c"], D8: ["约束条件右"], E8: ["函数值"],
  A9: ["目标函数系"], B9: ["15", "c"], C9: ["10", "c"], E9: ["0", "s y box topline"],
  A10: ["约束条件1"], B10: ["2", "c"], C10: ["3", "c"], D10: ["16", "r"], E10: ["0", "s y box topline err"],
  A11: ["约束条件2"], B11: ["2", "c"], C11: ["1", "c"], D11: ["7", "c"], E11: ["0", "s y box topline err"],
  A12: ["结果存放处", "spill"], B12: ["", "y box ants"], C12: ["", "y"], E12: ["", "cursor"]
};

function add(parent, tag, text, cls) {
  const el = document.createElement(tag);
  if (text) el.textContent = text;
  if (cls) el.className = cls;
  parent.append(el);
  return el;
}

const grid = document.getElementById("grid");
const cols = add(grid, "colgroup");
add(cols, "col").style.width = "42px";
for (const l of letters) add(cols, "col").style.width = (wide[l] || 80) + "px";

const head = add(add(grid, "thead"), "tr");
add(head, "th", "", "corner");
for (const l of letters) add(head, "th", l, l === "E" ? "sel" : "");

const body = add(grid, "tbody");
for (let r = 1; r <= 31; r++) {
  const tr = add(body, "tr");
  add(tr, "th", String(r), r === 12 ? "sel" : "");
  for (const l of letters) {
    const [text, cls] = cells[l + r] || [];
    add(tr, "td", text, cls);
  }
}
```
